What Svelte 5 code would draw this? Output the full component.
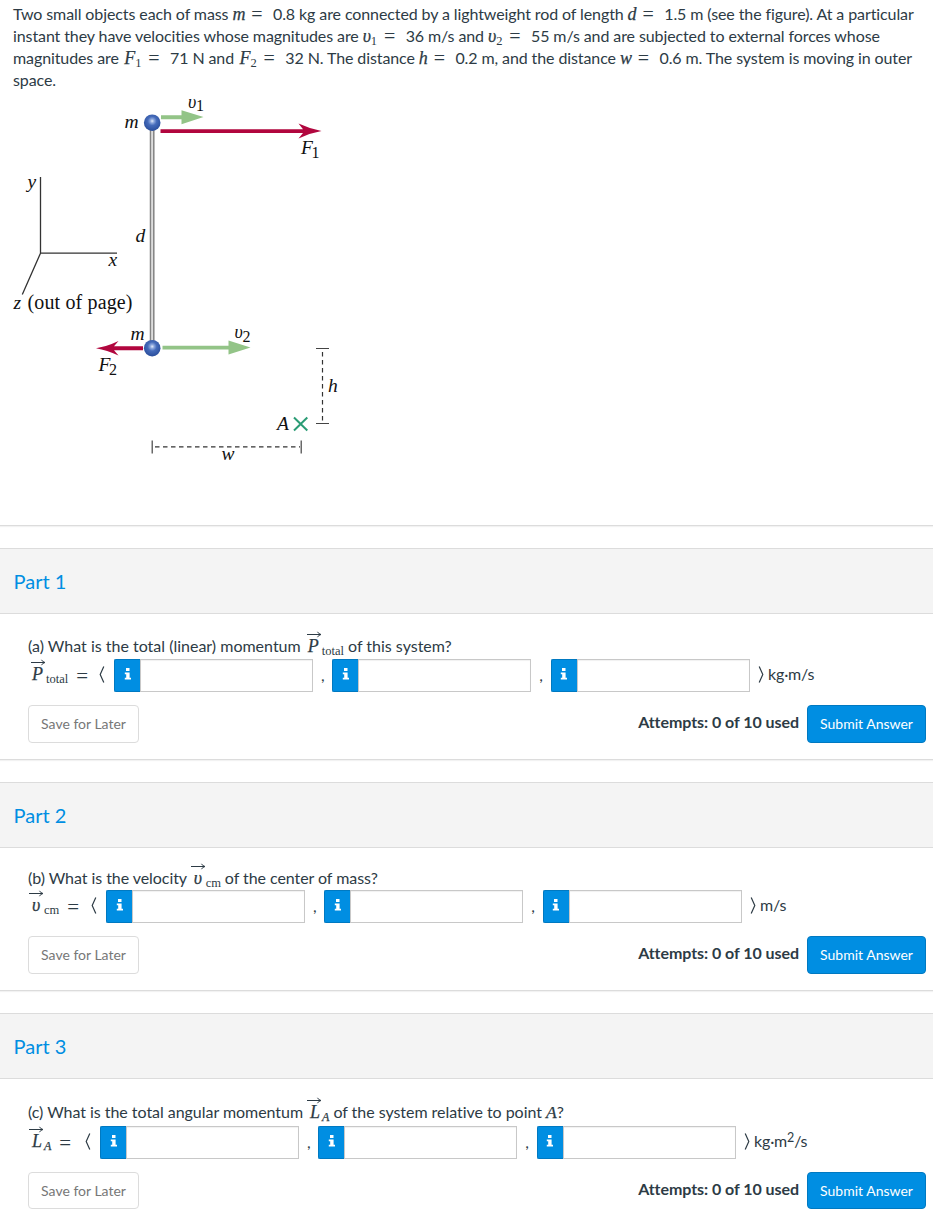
<script lang="ts">
  const parts = [
    {
      name: "momentum",
      title: "Part 1",
      before: "(a) What is the total (linear) momentum",
      letter: "P",
      sub: "total",
      after: "of this system?",
      unit: "kg·m/s",
    },
    {
      name: "velocity",
      title: "Part 2",
      before: "(b) What is the velocity",
      letter: "υ",
      sub: "cm",
      after: "of the center of mass?",
      unit: "m/s",
    },
    {
      name: "angular",
      title: "Part 3",
      before: "(c) What is the total angular momentum",
      letter: "L",
      sub: "A",
      after: "of the system relative to point",
      point: "A",
      unit: "kg·m",
      power: "2",
      unitEnd: "/s",
    },
  ];

  let answers = $state(parts.map(() => ["", "", ""]));
</script>

{#snippet vector(letter: string, sub: string)}
  <span class="vector">
    <span class="letter" class:narrow={letter !== "P"}>
      <svg class="over" width="15" height="7" viewBox="0 0 15 7">
        <path d="M0 3.5H13.5M10.5 .8Q11.5 3 14 3.5Q11.5 4 10.5 6.2" />
      </svg>{letter}</span><span class="sub" class:italic={sub === "A"}>{sub}</span>
  </span>
{/snippet}

{#snippet variable(letter: string, sub: string = "")}<span class="var" class:indexed={sub} class:force={letter === "F"}>{letter}{#if sub}<span class="index">{sub}</span>{/if}</span><span class="eq">=</span>{/snippet}

<main>
  <section class="intro">
    <div class="statement">
      <div class="line">Two small objects each of mass {@render variable("m")}0.8 kg are connected by a lightweight rod of length {@render variable("d")}1.5 m (see the figure). At a particular</div>
      <div class="line">instant they have velocities whose magnitudes are {@render variable("υ", "1")}36 m/s and {@render variable("υ", "2")}55 m/s and are subjected to external forces whose</div>
      <div class="line">magnitudes are {@render variable("F", "1")}71 N and {@render variable("F", "2")}32 N. The distance {@render variable("h")}0.2 m, and the distance {@render variable("w")}0.6 m. The system is moving in outer</div>
      <div class="line">space.</div>
    </div>

    <svg class="figure" width="350" height="380" viewBox="0 92 350 380">
      <defs>
        <radialGradient id="ball" cx=".5" cy=".4" r=".6">
          <stop offset="0" stop-color="#e4ecfa" />
          <stop offset=".2" stop-color="#8ba6dc" />
          <stop offset=".45" stop-color="#456bba" />
          <stop offset="1" stop-color="#294d9b" />
        </radialGradient>
        <linearGradient id="rod">
          <stop offset="0" stop-color="#666" />
          <stop offset=".25" stop-color="#999" />
          <stop offset=".4" stop-color="#ddd" />
          <stop offset=".65" stop-color="#ddd" />
          <stop offset=".8" stop-color="#888" />
          <stop offset="1" stop-color="#555" />
        </linearGradient>
      </defs>

      <!-- axes -->
      <path class="axis" d="M40.5 177V253.2H117M40.5 253.2L22.3 294.5" />

      <!-- rod and masses -->
      <rect x="149.8" y="126" width="4.6" height="218" fill="url(#rod)" />
      <circle cx="152.2" cy="122.7" r="8.3" fill="url(#ball)" />
      <circle cx="152.2" cy="348.2" r="8.3" fill="url(#ball)" />

      <!-- velocities -->
      <path fill="#93c487" d="M161 115.3H181.5V110.2L203.5 117L181.5 124.3V119.2H161Z" />
      <path fill="#93c487" d="M162.5 345.8H228.5V340.6L250.5 347.5L228.5 354.4V349.5H162.5Z" />

      <!-- forces -->
      <path fill="#b1063e" d="M160.5 129.2H303L298.5 123.6Q310 129 321.5 131Q310 133 298.5 138.4L303 133H160.5Z" />
      <path fill="#b1063e" d="M143 346.2H114L118.5 341Q107 346.5 96 348.2Q107 350 118.5 355.6L114 350.2H143Z" />

      <!-- distances -->
      <path class="tick" d="M316 348.5H329M316 423.5H329M152.2 440.5V453.5M301.2 440.5V453.5" />
      <path class="dash" d="M322.5 352V422" />
      <path class="dash" d="M155 446.8H300" />
      <path class="cross" d="M294 417.5L307.3 430.5M307.3 417.5L294 430.5" />

      <g class="labels">
        <text x="124.5" y="128">m</text>
        <text class="speed" x="188" y="107.5">υ</text>
        <text class="num" x="196" y="111">1</text>
        <text x="301" y="154">F</text>
        <text class="num" x="311.5" y="158">1</text>
        <text x="27.5" y="187.5">y</text>
        <text x="108.5" y="266">x</text>
        <text x="135.5" y="242">d</text>
        <text x="13.5" y="309">z</text>
        <text class="words" x="27.5" y="309" textLength="105">(out of page)</text>
        <text x="130.5" y="340">m</text>
        <text class="speed" x="234.5" y="338">υ</text>
        <text class="num" x="242.5" y="341.5">2</text>
        <text x="98.5" y="371">F</text>
        <text class="num" x="109" y="374.5">2</text>
        <text x="328" y="391.5">h</text>
        <text x="277" y="430">A</text>
        <text x="221.5" y="460">w</text>
      </g>
    </svg>
  </section>

  {#each parts as part, i}
    <section class="part {part.name}">
      <header><h2>{part.title}</h2></header>
      <div class="body">
        <p class="question">
          {part.before}
          {@render vector(part.letter, part.sub)}
          <span class="after">{part.after}{#if part.point}&nbsp;<i class="point">{part.point}</i>?{/if}</span>
        </p>
        <div class="answer">
          <div class="label">
            {@render vector(part.letter, part.sub)}
            <span class="equals">=</span>
            <svg class="angle" width="6" height="17" viewBox="0 0 6 17"><path d="M4.8 .5L1.2 8.5L4.8 16.5" /></svg>
          </div>
          {#each answers[i] as _, j}
            {#if j > 0}<span class="comma">,</span>{/if}
            <div class="field">
              <button class="info" aria-label="Answer format">
                <svg width="8" height="12" viewBox="0 0 8 12">
                  <path d="M2 0H5.5V3H2ZM.8 4.5H5.6V9.8H7V11.6H.8V9.8H2.2V6.3H.8Z" />
                </svg>
              </button>
              <input bind:value={answers[i][j]} aria-label="Component {j + 1}" />
            </div>
          {/each}
          <svg class="angle end" width="6" height="17" viewBox="0 0 6 17"><path d="M1.2 .5L4.8 8.5L1.2 16.5" /></svg>
          <span class="unit">{part.unit}{#if part.power}<sup>{part.power}</sup>{part.unitEnd}{/if}</span>
        </div>
        <div class="actions">
          <button class="save">Save for Later</button>
          <span class="attempts">Attempts: 0 of 10 used</span>
          <button class="submit">Submit Answer</button>
        </div>
      </div>
    </section>
  {/each}
</main>

<style>
  :global(body) {
    background: #fff;
    overflow: hidden;
  }
  main {
    width: 933px;
    height: 1210px;
    overflow: hidden;
    font-family: Lato, sans-serif;
    font-size: 16px;
    line-height: 22px;
    font-variant-ligatures: none;
    color: #2d3b45;
  }
  .intro {
    box-sizing: border-box;
    height: 526px;
    border-bottom: 1px solid #dcdcdc;
    box-shadow: 0 1px 1px rgba(0, 0, 0, 0.05);
  }
  .statement {
    height: 92px;
    box-sizing: border-box;
    padding: 3px 0 0 13px;
  }
  .line { white-space: nowrap; letter-spacing: -0.1px; }
  .figure { display: block; overflow: visible; }
  .var {
    font-family: "Liberation Serif", serif;
    font-style: italic;
    font-size: 18px;
    line-height: 0;
    -webkit-text-stroke: 0.25px #2d3b45;
  }
  .force { margin-left: 1.5px; }
  .index {
    font-style: normal;
    font-size: 12.5px;
    position: relative;
    top: 3px;
    -webkit-text-stroke: 0;
  }
  .eq {
    font-family: "Liberation Serif", serif;
    font-size: 20px;
    line-height: 0;
    position: relative;
    top: 1px;
    margin: 0 10.5px 0 6px;
  }
  .indexed + .eq { margin-left: 7px; }
  .axis { fill: none; stroke: #333; stroke-width: 1.3; }
  .tick { stroke: #444; stroke-width: 1.2; }
  .dash { stroke: #333; stroke-width: 1.2; stroke-dasharray: 4.5 3.5; }
  .cross { stroke: #2b9c75; stroke-width: 2; }
  .labels {
    font-family: "Liberation Serif", serif;
    font-style: italic;
    font-size: 19.5px;
    fill: #111;
  }
  .labels .num { font-style: normal; font-size: 16px; }
  .labels .speed { font-size: 18px; }
  .labels .words { font-style: normal; font-size: 20px; }

  .part {
    margin-top: 22px;
    border-top: 1px solid #dcdcdc;
    border-bottom: 1px solid #dcdcdc;
    box-shadow: 0 1px 1px rgba(0, 0, 0, 0.05);
  }
  header {
    height: 64px;
    background: #f4f4f4;
    border-bottom: 1px solid #dcdcdc;
    display: flex;
    align-items: center;
    padding-left: 13px;
  }
  h2 {
    margin: 0 0 0 0.5px;
    font-size: 20px;
    font-weight: 400;
    color: #008ee2;
  }
  .body { padding: 21px 7px 16px 28px; }
  .question {
    margin: 0;
    height: 24px;
    display: flex;
    white-space: pre;
    align-items: baseline;
  }
  .velocity .question { height: 21px; margin-top: -2px; padding-bottom: 2px; letter-spacing: -0.06px; }
  .angular .question { height: 25px; padding-top: 1px; letter-spacing: -0.04px; }
  .vector {
    display: inline-flex;
    align-items: baseline;
    font-family: "Liberation Serif", serif;
    line-height: 22px;
  }
  .question .vector { margin: 0 4px 0 3px; }
  .letter {
    position: relative;
    font-size: 18px;
    font-style: italic;
    min-width: 14px;
    -webkit-text-stroke: 0.25px #2d3b45;
  }
  .narrow { min-width: 12px; }
  .over {
    position: absolute;
    left: -1px;
    top: -4px;
    fill: none;
    stroke: #2d3b45;
  }
  .narrow .over { left: -3px; }
  .sub { font-size: 12.5px; position: relative; top: 3px; }
  .sub.italic { font-style: italic; font-size: 12px; -webkit-text-stroke: 0.25px #2d3b45; }
  .point {
    font-family: "Liberation Serif", serif;
    font-size: 17.5px;
    line-height: 0;
    -webkit-text-stroke: 0.25px #2d3b45;
  }
  .answer { display: flex; height: 33px; align-items: center; }
  .label {
    width: 86px;
    box-sizing: border-box;
    padding: 0 9px 2px 4px;
    display: flex;
    align-items: center;
  }
  .velocity .label { width: 78px; }
  .angular .label { width: 72px; }
  .equals {
    font-family: "Liberation Serif", serif;
    font-size: 21px;
    margin: 2px auto 0 8px;
  }
  .narrow ~ .equals { margin-left: 9px; }
  .angle { fill: none; stroke: #2d3b45; stroke-width: 1.2; }
  .angle.end { margin: 0 4px 2px 8.5px; }
  .comma { width: 19.3px; padding: 0 0 1px 8px; box-sizing: border-box; }
  .field { display: flex; width: 199px; height: 33px; }
  .info {
    width: 26px;
    padding: 0;
    border: 1px solid #0079c1;
    border-right: 0;
    border-radius: 2px 0 0 2px;
    background: #008ee2;
    fill: #fff;
  }
  input {
    flex: 1;
    min-width: 0;
    border: 1px solid #c8c8c8;
    padding: 0 6px;
    font: inherit;
    outline: 0;
    box-shadow: inset 0 1px 1px rgba(0, 0, 0, 0.06);
  }
  .unit { padding-bottom: 3px; letter-spacing: -0.2px; }
  sup { font-size: 12.5px; line-height: 0; vertical-align: 5px; }
  .actions { display: flex; align-items: center; margin-top: 13px; height: 38px; }
  .save, .submit {
    box-sizing: border-box;
    height: 38px;
    padding: 0;
    border-radius: 4px;
    font: 14px/20px Lato, sans-serif;
  }
  .save { width: 111px; background: #fff; border: 1px solid #dcdcdc; color: #777; }
  .submit { width: 119px; background: #008ee2; border: 1px solid #0079c1; color: #fff; }
  .angular .save, .angular .submit { height: 37px; margin-bottom: 1px; }
  .attempts { margin: 0 8px 4px auto; font-weight: 700; letter-spacing: -0.05px; }
</style>
